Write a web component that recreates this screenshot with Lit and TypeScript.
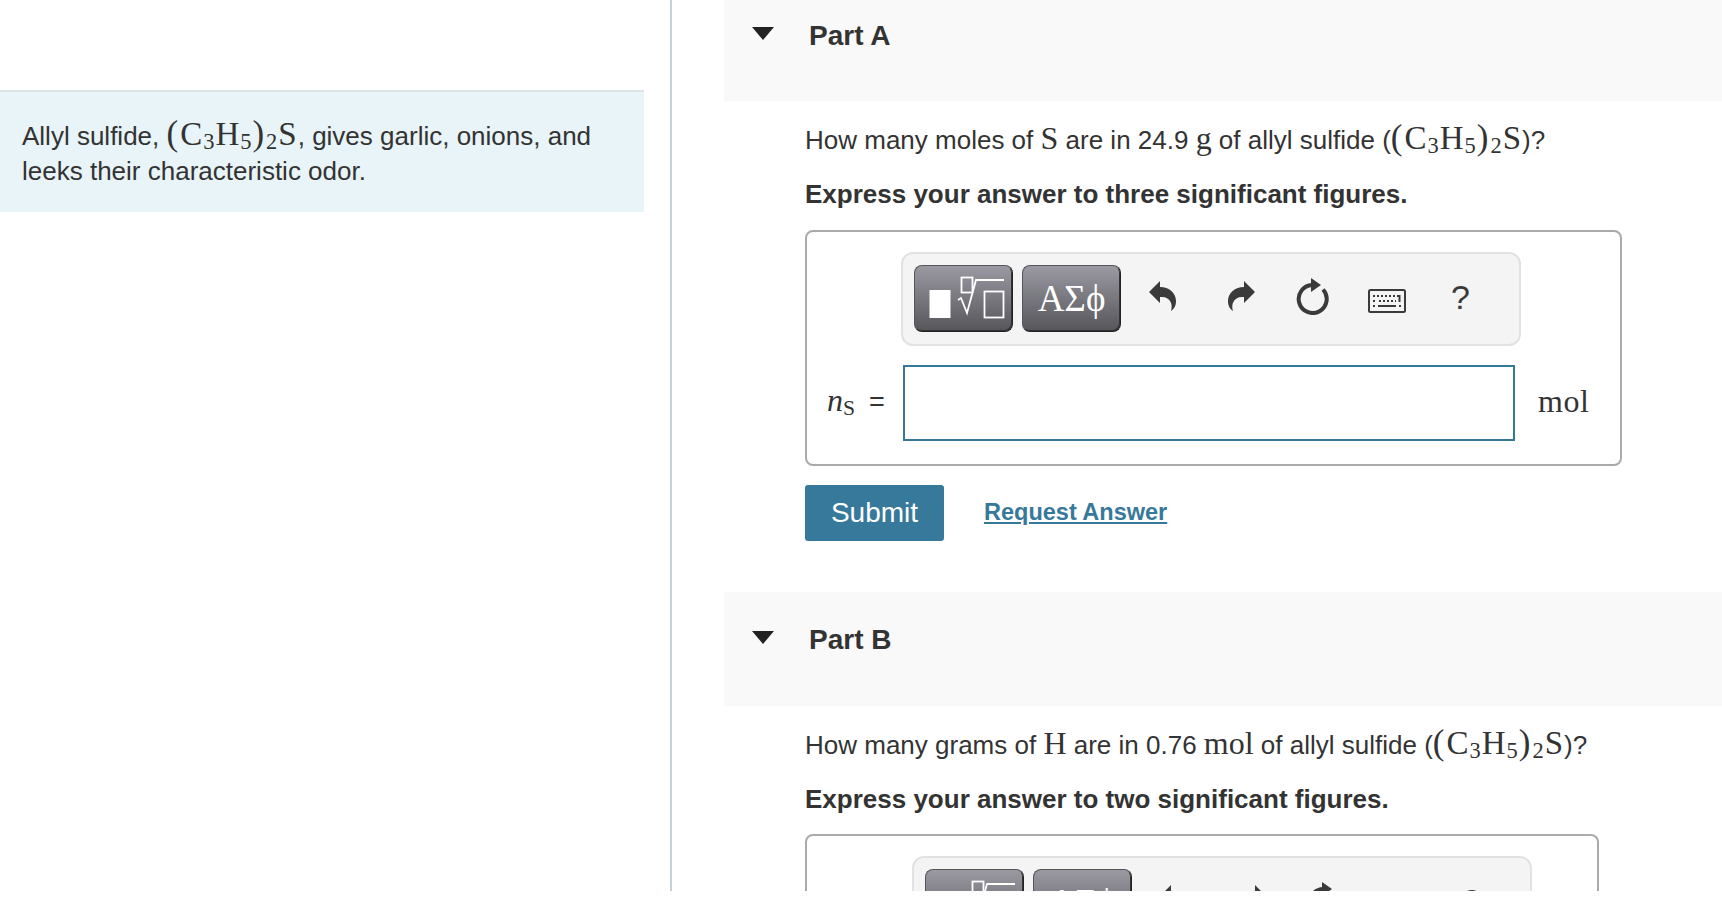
import { LitElement, html, css, nothing } from "lit";
import { customElement } from "lit/decorators.js";

const formula = html`<span class="formula"><span class="paren">(</span>C<sub>3</sub>H<sub>5</sub><span class="paren">)</span><sub>2</sub>S</span>`;

const toolbar = html`
  <div class="toolbar">
    <div class="tool-btn">
      <svg width="97" height="65" viewBox="0 0 97 65" fill="none" stroke="#fff" stroke-width="1.8">
        <rect x="14.5" y="24" width="21" height="28" fill="#fff" stroke="none"></rect>
        <rect x="46.5" y="11.500" width="11" height="15"></rect>
        <path d="M43 34l3-2 6 15 9-33h28"></path>
        <rect x="69.500" y="25.500" width="19" height="26"></rect>
      </svg>
    </div>
    <div class="tool-btn greek">ΑΣϕ</div>
    <div class="cell undo">
      <svg width="27" height="32" viewBox="0 0 27 32"><path fill="#3a3a3a" d="M0 12 11 1v6c9 0 16 6 16 14 0 5-2 8-5 10 2-6 0-15-11-14v6z"></path></svg>
    </div>
    <div class="cell">
      <svg class="nudge" width="27" height="32" viewBox="0 0 27 32"><path fill="#3a3a3a" d="M27 12 16 1v6C7 7 0 13 0 21c0 5 2 8 5 10-2-6 0-15 11-14v6z"></path></svg>
    </div>
    <div class="cell shift">
      <svg width="34" height="38" viewBox="0 0 34 38">
        <path d="M27 12.500A14 14 0 1 1 16 8" fill="none" stroke="#3a3a3a" stroke-width="4"></path>
        <path d="M15 1l10 7-10 7z" fill="#3a3a3a"></path>
      </svg>
    </div>
    <div class="cell shift">
      <svg class="kbd" width="38" height="24" viewBox="0 0 38 24" fill="none" stroke="#3a3a3a">
        <rect x="1" y="1" width="36" height="22" rx="1.500" stroke-width="2"></rect>
        <path d="M5 7h27" stroke-width="2" stroke-dasharray="2 2"></path>
        <path d="M5 12h3M11 12h17" stroke-width="2" stroke-dasharray="2 2"></path>
        <path d="M31.500 6v7" stroke-width="2"></path>
        <path d="M5 17h2M10 17h18M31 17h2" stroke-width="2"></path>
      </svg>
    </div>
    <div class="cell help">?</div>
  </div>
`;

@customElement("app-root")
export class AppRoot extends LitElement {
  static styles = css`
    :host {
      display: block;
      height: 891px;
      overflow: hidden;
      background: #fff;
      color: #333;
      font-family: "Liberation Sans", Arial, sans-serif;
      font-size: 26px;
      line-height: 36px;
    }
    .page { display: flex; height: 891px; }
    .left {
      width: 670px;
      flex: none;
      border-right: 2px solid #c4d2dc;
      padding-top: 90px;
    }
    .intro {
      width: 644px;
      height: 122px;
      box-sizing: border-box;
      border-top: 2px solid #dfe3e5;
      background: #e8f4f7;
      padding: 27px 0 0 22px;
      line-height: 35px;
    }
    .right { flex: 1; min-width: 0; padding-left: 52px; }
    .part-head {
      display: flex;
      align-items: flex-start;
      box-sizing: border-box;
      background: #f9f9f9;
      padding-left: 28px;
      font-weight: 700;
      font-size: 28px;
    }
    .part-a .part-head { height: 101px; padding-top: 18px; }
    .part-b .part-head { height: 114px; padding-top: 30px; }
    .tri {
      width: 0;
      height: 0;
      border-left: 11px solid transparent;
      border-right: 11px solid transparent;
      border-top: 13px solid #222;
      margin-top: 9px;
      margin-right: 35px;
    }
    .part-body { padding-left: 81px; }
    .q { margin: 0; padding-top: 21px; }
    .ins { margin: 18px 0 0; font-weight: 700; }
    .box {
      border: 2px solid #aaa;
      border-radius: 8px;
      box-sizing: border-box;
      height: 236px;
      padding-top: 20px;
    }
    .part-a .box { width: 817px; margin-top: 18px; }
    .part-b .box { width: 794px; margin-top: 17px; }
    .toolbar {
      display: flex;
      align-items: flex-start;
      width: 620px;
      height: 94px;
      box-sizing: border-box;
      border: 2px solid #e2e2e2;
      border-radius: 12px;
      background: #f4f4f4;
      padding: 11px 0 0 11px;
    }
    .part-a .toolbar { margin-left: 94px; }
    .part-b .toolbar { margin-left: 105px; }
    .tool-btn {
      width: 99px;
      height: 67px;
      box-sizing: border-box;
      margin-right: 9px;
      border: 1px solid #55555a;
      border-right-color: #222;
      border-bottom-color: #222;
      box-shadow: inset -1px -1px 0 #333;
      border-radius: 8px;
      background: linear-gradient(#9b9aa3, #55555a);
      display: flex;
      align-items: center;
      justify-content: center;
      color: #fff;
    }
    .greek { font-family: "Liberation Serif", serif; font-size: 37px; margin-right: 5px; }
    .cell {
      width: 74px;
      height: 60px;
      margin-top: 1px;
      display: flex;
      align-items: center;
      justify-content: center;
      color: #3a3a3a;
    }
    .undo { padding-right: 1px; box-sizing: border-box; }
    .shift { padding-left: 4px; box-sizing: border-box; }
    .nudge { margin-left: 8px; }
    .kbd { margin-top: 10px; }
    .help { font-size: 34px; padding: 2px 0 0 3px; box-sizing: border-box; }
    .row { display: flex; align-items: center; margin-top: 19px; }
    .label {
      width: 76px;
      margin-left: 20px;
      padding-bottom: 4px;
      flex: none;
      font-family: "Liberation Serif", serif;
      font-size: 32px;
    }
    .label sub { font-style: normal; }
    .eq { font-family: "Liberation Sans", sans-serif; font-size: 27px; margin-left: 14px; }
    .input {
      width: 612px;
      height: 76px;
      flex: none;
      box-sizing: border-box;
      border: 2px solid #36779a;
    }
    .unit {
      margin-left: 23px;
      font-family: "Liberation Serif", serif;
      font-size: 32px;
      letter-spacing: 0.5px;
      padding-bottom: 4px;
    }
    .actions { display: flex; align-items: center; margin-top: 19px; margin-bottom: 51px; }
    .submit {
      width: 139px;
      height: 56px;
      border-radius: 3px;
      background: #36799b;
      color: #fff;
      font-size: 28px;
      display: flex;
      align-items: center;
      justify-content: center;
      margin-right: 40px;
    }
    .link { color: #36799b; font-weight: 700; font-size: 23.5px; text-decoration: underline; padding-bottom: 2px; }
    .math { font-family: "Liberation Serif", serif; font-size: 32px; line-height: 0; }
    .formula { font-family: "Liberation Serif", serif; font-size: 33px; letter-spacing: 1px; line-height: 0; }
    .paren { font-size: 35px; font-weight: 400; line-height: 0; letter-spacing: 2px; }
    sub { font-size: 0.68em; line-height: 0; vertical-align: -0.2em; }
  `;

  private part(cls: string, title: string, q: unknown, ins: string, full: boolean) {
    return html`
      <section class=${cls}>
        <div class="part-head"><span class="tri"></span><span>${title}</span></div>
        <div class="part-body">
          <p class="q">${q}</p>
          <p class="ins">${ins}</p>
          <div class="box">
            ${toolbar}
            ${full
              ? html`<div class="row">
                  <span class="label"><i>n</i><sub>S</sub><span class="eq">=</span></span>
                  <div class="input"></div>
                  <span class="unit">mol</span>
                </div>`
              : nothing}
          </div>
          ${full
            ? html`<div class="actions">
                <div class="submit">Submit</div>
                <span class="link">Request Answer</span>
              </div>`
            : nothing}
        </div>
      </section>
    `;
  }

  render() {
    return html`
      <div class="page">
        <div class="left">
          <div class="intro">Allyl sulfide, ${formula}, gives garlic, onions, and<br />leeks their characteristic odor.</div>
        </div>
        <div class="right">
          ${this.part(
            "part-a",
            "Part A",
            html`How many moles of <span class="math">S</span> are in 24.9 <span class="math">g</span> of allyl sulfide (${formula})?`,
            "Express your answer to three significant figures.",
            true
          )}
          ${this.part(
            "part-b",
            "Part B",
            html`How many grams of <span class="math">H</span> are in 0.76 <span class="math">mol</span> of allyl sulfide (${formula})?`,
            "Express your answer to two significant figures.",
            false
          )}
        </div>
      </div>
    `;
  }
}
